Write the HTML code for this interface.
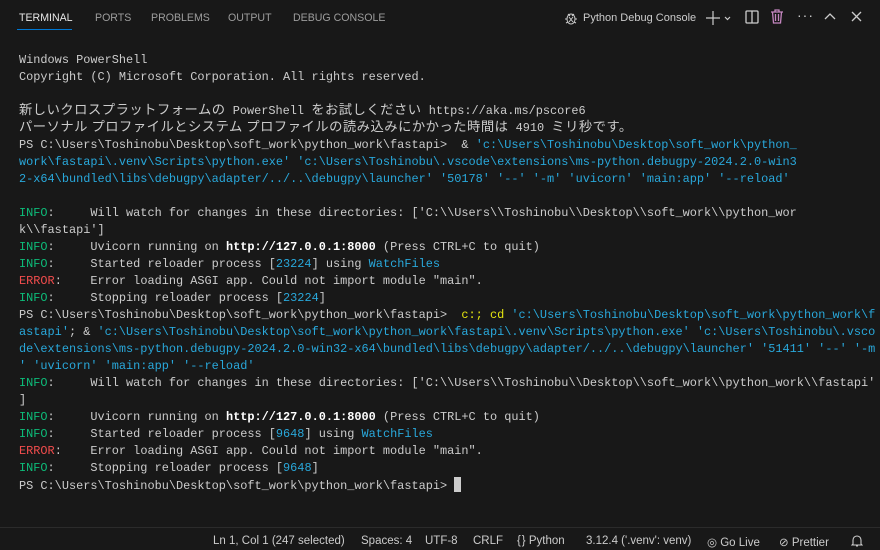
<!DOCTYPE html>
<html><head><meta charset="utf-8"><style>
html,body{margin:0;padding:0;background:#181818;width:880px;height:550px;overflow:hidden}
body{position:relative;font-family:"Liberation Sans",sans-serif}
.tabs{position:absolute;top:0;left:0;right:0;height:36px}
.tab{position:absolute;top:12px;font-size:10.6px;color:#9d9d9d}
.tab.a{color:#e7e7e7}
.ul{position:absolute;left:17px;top:29px;width:55px;height:1px;background:#0078d4}
.term{position:absolute;left:19px;top:52px;font-family:"Liberation Mono","Noto Sans CJK JP",monospace;font-size:11.9px;line-height:17px;color:#cccccc;white-space:pre;margin:0}
.j{font-family:"Noto Sans CJK JP",sans-serif;font-size:13.3px;line-height:10px;letter-spacing:0.5px}
.b{color:#29a8db}.g{color:#0dbc79}.r{color:#f14c4c}.y{color:#e5e510}.w{color:#fff;font-weight:bold}
.cur{display:inline-block;width:7px;height:15px;background:#cccccc;vertical-align:-3px}
.sb{position:absolute;left:0;right:0;bottom:0;height:22px;border-top:1px solid #2b2b2b;font-size:11.5px;color:#cccccc}
.sb span{position:absolute;top:7px}
.ic{position:absolute;color:#ccc}
</style></head><body>
<div class="tabs">
<span class="tab a" style="left:19px">TERMINAL</span>
<span class="tab" style="left:95px">PORTS</span>
<span class="tab" style="left:151px">PROBLEMS</span>
<span class="tab" style="left:228px">OUTPUT</span>
<span class="tab" style="left:293px">DEBUG CONSOLE</span>
<div class="ul"></div>
<svg style="position:absolute;left:563px;top:10px" width="16" height="16" viewBox="0 0 16 16" fill="none" stroke="#ccc" stroke-width="1"><ellipse cx="8" cy="9" rx="4" ry="5"/><path d="M5 4l2 2M11 4l-2 2M2 9h2M12 9h2M3 13l2-1M13 13l-2-1M6 7l4 5M10 7l-4 5"/></svg>
<span class="tab" style="left:583px;color:#ccc;font-size:11px">Python Debug Console</span>
<svg style="position:absolute;left:705px;top:10px" width="30" height="16" viewBox="0 0 30 16" fill="none" stroke="#ccc" stroke-width="1.2"><path d="M8 1v14M1 8h14M20 7l2.5 2.5L25 7"/></svg>
<svg style="position:absolute;left:745px;top:10px" width="14" height="14" viewBox="0 0 14 14" fill="none" stroke="#ccc" stroke-width="1.3"><rect x="1" y="1" width="12" height="12" rx="1"/><path d="M7 1v12"/></svg>
<svg style="position:absolute;left:770px;top:9px" width="14" height="15" viewBox="0 0 14 15" fill="none" stroke="#c586c0" stroke-width="1.3"><path d="M1 3h12M5 3V1h4v2M2.5 3l1 11h7l1-11M5.5 5v7M8.5 5v7"/></svg>
<span class="ic" style="left:797px;top:7px;font-size:14px;letter-spacing:1px">···</span>
<svg style="position:absolute;left:824px;top:12px" width="12" height="8" viewBox="0 0 12 8" fill="none" stroke="#ccc" stroke-width="1.3"><path d="M1 7l5-5 5 5"/></svg>
<svg style="position:absolute;left:851px;top:11px" width="11" height="11" viewBox="0 0 11 11" fill="none" stroke="#ccc" stroke-width="1.3"><path d="M1 1l9 9M10 1l-9 9"/></svg>
</div>
<pre class="term">Windows PowerShell
Copyright (C) Microsoft Corporation. All rights reserved.

<span class="j">新しいクロスプラットフォームの</span> PowerShell <span class="j">をお試しください</span> https://aka.ms/pscore6
<span class="j">パーソナル プロファイルとシステム プロファイルの読み込みにかかった時間は</span> 4910 <span class="j">ミリ秒です。</span>
PS C:\Users\Toshinobu\Desktop\soft_work\python_work\fastapi>  &amp; <span class="b">'c:\Users\Toshinobu\Desktop\soft_work\python_</span>
<span class="b">work\fastapi\.venv\Scripts\python.exe' 'c:\Users\Toshinobu\.vscode\extensions\ms-python.debugpy-2024.2.0-win3</span>
<span class="b">2-x64\bundled\libs\debugpy\adapter/../..\debugpy\launcher' '50178' '--' '-m' 'uvicorn' 'main:app' '--reload'</span>

<span class="g">INFO</span>:     Will watch for changes in these directories: ['C:\\Users\\Toshinobu\\Desktop\\soft_work\\python_wor
k\\fastapi']
<span class="g">INFO</span>:     Uvicorn running on <span class="w">http://127.0.0.1:8000</span> (Press CTRL+C to quit)
<span class="g">INFO</span>:     Started reloader process [<span class="b">23224</span>] using <span class="b">WatchFiles</span>
<span class="r">ERROR</span>:    Error loading ASGI app. Could not import module "main".
<span class="g">INFO</span>:     Stopping reloader process [<span class="b">23224</span>]
PS C:\Users\Toshinobu\Desktop\soft_work\python_work\fastapi>  <span class="y">c:;</span> <span class="y">cd</span> <span class="b">'c:\Users\Toshinobu\Desktop\soft_work\python_work\f</span>
<span class="b">astapi'</span>; &amp; <span class="b">'c:\Users\Toshinobu\Desktop\soft_work\python_work\fastapi\.venv\Scripts\python.exe' 'c:\Users\Toshinobu\.vsco</span>
<span class="b">de\extensions\ms-python.debugpy-2024.2.0-win32-x64\bundled\libs\debugpy\adapter/../..\debugpy\launcher' '51411' '--' '-m</span>
<span class="b">' 'uvicorn' 'main:app' '--reload'</span>
<span class="g">INFO</span>:     Will watch for changes in these directories: ['C:\\Users\\Toshinobu\\Desktop\\soft_work\\python_work\\fastapi'
]
<span class="g">INFO</span>:     Uvicorn running on <span class="w">http://127.0.0.1:8000</span> (Press CTRL+C to quit)
<span class="g">INFO</span>:     Started reloader process [<span class="b">9648</span>] using <span class="b">WatchFiles</span>
<span class="r">ERROR</span>:    Error loading ASGI app. Could not import module "main".
<span class="g">INFO</span>:     Stopping reloader process [<span class="b">9648</span>]
PS C:\Users\Toshinobu\Desktop\soft_work\python_work\fastapi> <span class="cur"></span></pre>
<div class="sb">
<span style="left:213px">Ln 1, Col 1 (247 selected)</span>
<span style="left:361px">Spaces: 4</span>
<span style="left:425px">UTF-8</span>
<span style="left:473px">CRLF</span>
<span style="left:517px">{&#8202;} Python</span>
<span style="left:586px">3.12.4 ('.venv': venv)</span>
<span style="left:707px">&#9678; Go Live</span>
<span style="left:779px">&#8856; Prettier</span>
<svg style="position:absolute;left:851px;top:6px" width="12" height="13" viewBox="0 0 12 13" fill="none" stroke="#ccc" stroke-width="1.1"><path d="M2 10V6a4 4 0 0 1 8 0v4l1 1H1zM5 12h2"/></svg>
</div>
</body></html>
